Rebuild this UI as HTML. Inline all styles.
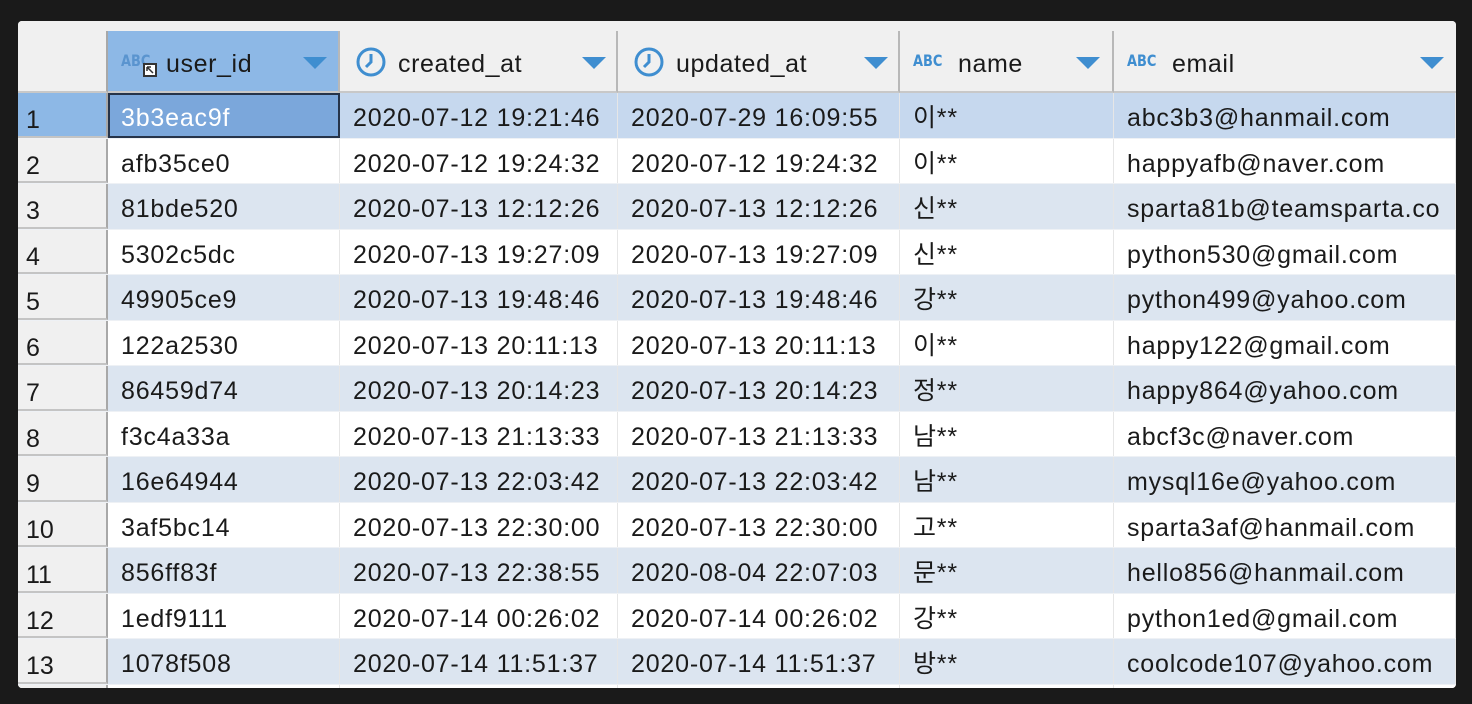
<!DOCTYPE html>
<html><head><meta charset="utf-8"><style>
*{margin:0;padding:0;box-sizing:border-box}
body{width:1472px;height:704px;background:#1a1a1a;position:relative;overflow:hidden;font-family:"Liberation Sans","Noto Sans CJK KR",sans-serif}
#p{position:absolute;left:18px;top:21px;width:1438px;height:667px;background:#fff;border-radius:4px;overflow:hidden}
.hd{position:absolute;top:0;height:72px;background:#f0f0f0}
.hc{position:absolute;top:10px;height:62px;border-right:2px solid #b8b8b8;border-bottom:2px solid #c8c8c8;font-size:25px;letter-spacing:0.6px;color:#1a1a1a}
.hc .t{position:absolute;top:19px}
.tri{position:absolute;top:26px;width:0;height:0;border-left:12px solid transparent;border-right:12px solid transparent;border-top:12px solid #3f8ed0}
.abc{position:absolute;top:20px;font:bold 16px "DejaVu Sans Condensed","DejaVu Sans",sans-serif;color:#3f8ed0;letter-spacing:0px;transform:scaleX(0.9);transform-origin:left}
.row{position:absolute;left:0;width:1438px;height:45.5px}
.c{position:absolute;top:0;height:100%;font-size:25px;letter-spacing:0.8px;color:#1a1a1a;line-height:50px;padding-left:13px;border-right:1px solid #e6e6e6;white-space:nowrap;overflow:hidden}
.rn{position:absolute;left:0;top:0;width:90px;height:100%;background:#f0f0f0;border-right:2px solid #a8a8a8;border-bottom:2px solid #c4c4c4;font-size:25px;line-height:54px;padding-left:8px;color:#1a1a1a}
</style></head><body>
<div id="p">
<div class="hd" style="left:0;width:1438px"></div>
<div class="hc" style="left:0;width:90px;border-right:2px solid #a8a8a8"></div>
<div class="hc" style="left:90px;width:232px;background:#8db8e6">
 <span class="abc" style="left:13px;color:#5a94cf">ABC</span>
 <svg style="position:absolute;left:35px;top:32px" width="14" height="14"><rect x="1" y="1" width="12" height="12" fill="#fff" stroke="#333" stroke-width="2"/><path d="M4 4 L10 10 M4 4 L4 8 M4 4 L8 4" stroke="#333" stroke-width="1.5"/></svg>
 <span class="t" style="left:58px">user_id</span><span class="tri" style="left:195px"></span></div>
<div class="hc" style="left:322px;width:278px">
 <svg style="position:absolute;left:16px;top:16px" width="30" height="30"><circle cx="15" cy="15" r="13" fill="none" stroke="#3f8ed0" stroke-width="3"/><path d="M15 7 V15 L10 20" fill="none" stroke="#3f8ed0" stroke-width="3"/></svg>
 <span class="t" style="left:58px">created_at</span><span class="tri" style="left:242px"></span></div>
<div class="hc" style="left:600px;width:282px">
 <svg style="position:absolute;left:16px;top:16px" width="30" height="30"><circle cx="15" cy="15" r="13" fill="none" stroke="#3f8ed0" stroke-width="3"/><path d="M15 7 V15 L10 20" fill="none" stroke="#3f8ed0" stroke-width="3"/></svg>
 <span class="t" style="left:58px">updated_at</span><span class="tri" style="left:246px"></span></div>
<div class="hc" style="left:882px;width:214px">
 <span class="abc" style="left:13px">ABC</span><span class="t" style="left:58px">name</span><span class="tri" style="left:176px"></span></div>
<div class="hc" style="left:1096px;width:342px;border-right:none">
 <span class="abc" style="left:13px">ABC</span><span class="t" style="left:58px">email</span><span class="tri" style="left:306px"></span></div>
<div id="rows"></div>
</div>
<script>
const d=[["3b3eac9f","2020-07-12 19:21:46","2020-07-29 16:09:55","이**","abc3b3@hanmail.com"],
["afb35ce0","2020-07-12 19:24:32","2020-07-12 19:24:32","이**","happyafb@naver.com"],
["81bde520","2020-07-13 12:12:26","2020-07-13 12:12:26","신**","sparta81b@teamsparta.co"],
["5302c5dc","2020-07-13 19:27:09","2020-07-13 19:27:09","신**","python530@gmail.com"],
["49905ce9","2020-07-13 19:48:46","2020-07-13 19:48:46","강**","python499@yahoo.com"],
["122a2530","2020-07-13 20:11:13","2020-07-13 20:11:13","이**","happy122@gmail.com"],
["86459d74","2020-07-13 20:14:23","2020-07-13 20:14:23","정**","happy864@yahoo.com"],
["f3c4a33a","2020-07-13 21:13:33","2020-07-13 21:13:33","남**","abcf3c@naver.com"],
["16e64944","2020-07-13 22:03:42","2020-07-13 22:03:42","남**","mysql16e@yahoo.com"],
["3af5bc14","2020-07-13 22:30:00","2020-07-13 22:30:00","고**","sparta3af@hanmail.com"],
["856ff83f","2020-07-13 22:38:55","2020-08-04 22:07:03","문**","hello856@hanmail.com"],
["1edf9111","2020-07-14 00:26:02","2020-07-14 00:26:02","강**","python1ed@gmail.com"],
["1078f508","2020-07-14 11:51:37","2020-07-14 11:51:37","방**","coolcode107@yahoo.com"],
["","","","",""]];
const xs=[[90,232],[322,278],[600,282],[882,214],[1096,342]];
let h="";
d.forEach((r,i)=>{
 const bg=i==0?"#c6d8ee":(i%2==0?"#dce5f0":"#fff");
 h+=`<div class="row" style="top:${72+i*45.5}px;background:${bg};border-bottom:1px solid #eef1f5">`;
 h+=`<div class="rn" style="${i==0?'background:#8db8e6;':''}">${i<13?i+1:''}</div>`;
 r.forEach((v,j)=>{
  let st=`left:${xs[j][0]}px;width:${xs[j][1]}px;`;
  if(i==0&&j==0) st+="background:#7ba7db;color:#fff;border:2px solid #26344a;line-height:46px;padding-left:11px;";
  h+=`<div class="c" style="${st}">${v}</div>`;
 });
 h+="</div>";
});
document.getElementById("rows").innerHTML=h;
</script>
</body></html>
